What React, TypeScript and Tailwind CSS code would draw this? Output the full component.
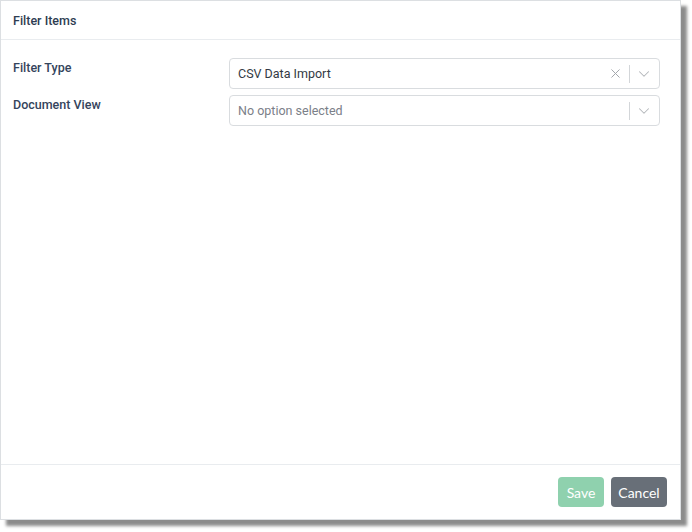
import { X, ChevronDown } from "lucide-react";

const SelectBox = ({ value, placeholder, clearable }: { value?: string; placeholder?: string; clearable?: boolean }) => (
  <div className="flex h-[31px] items-center rounded-[4px] border border-[#d9dcdf] bg-white pl-[8px] pr-[4px]">
    <span className={`flex-1 truncate pt-[2px] text-[12.5px] ${value ? "text-[#333a44]" : "text-[#7b8088]"}`}>
      {value ?? placeholder}
    </span>
    {clearable && <X className="mr-[6px] h-[15px] w-[15px] text-[#a3a7ac]" strokeWidth={1.6} />}
    <div className="h-[18px] w-px bg-[#d3d6d9]" />
    <ChevronDown className="ml-[5px] mr-[2px] h-[18px] w-[18px] text-[#b3b6ba]" strokeWidth={1.4} />
  </div>
);

export default function App() {
  return (
    <div className="h-[532px] w-[692px] bg-white font-['Roboto',sans-serif]">
      <div className="flex h-[520px] w-[681px] flex-col border border-[#dcdfe2] bg-white shadow-[6px_6px_3px_rgba(0,0,0,0.45)]">
        <div className="flex h-[39px] items-center border-b border-[#e9ecef] px-[12px] pt-[3px]">
          <h1 className="text-[12.5px] font-medium text-[#2e3d52]">Filter Items</h1>
        </div>

        <div className="flex-1 px-[12px] pt-[18px]">
          <div className="grid grid-cols-[216px_1fr] gap-y-[6px] pr-[8px]">
            <label className="pt-[1px] text-[12.5px] font-medium text-[#34445c]">Filter Type</label>
            <SelectBox value="CSV Data Import" clearable />
            <label className="pt-[1px] text-[12.5px] font-medium text-[#34445c]">Document View</label>
            <SelectBox placeholder="No option selected" />
          </div>
        </div>

        <div className="flex items-center justify-end gap-[7px] border-t border-[#e9ecef] pl-[12px] pr-[13px] pb-[12px] pt-[12px] font-['Lato',sans-serif]">
          <button className="h-[30px] w-[46px] rounded-[4px] bg-[#8fd1ae] text-[14px] text-white">Save</button>
          <button className="h-[30px] w-[56px] rounded-[4px] bg-[#686f78] text-[14px] text-white">Cancel</button>
        </div>
      </div>
    </div>
  );
}
